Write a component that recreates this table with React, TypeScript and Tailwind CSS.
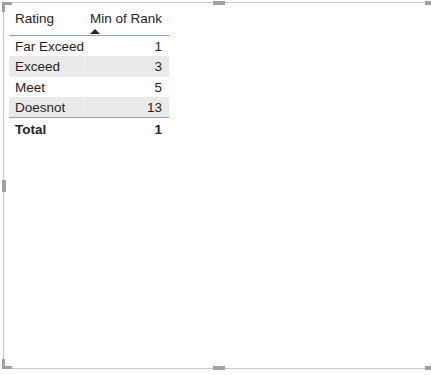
import React from 'react';

const rows = [
  { rating: 'Far Exceed', rank: 1 },
  { rating: 'Exceed', rank: 3 },
  { rating: 'Meet', rank: 5 },
  { rating: 'Doesnot', rank: 13 },
];

const rowHeights = ['h-[20px]', 'h-[21px]', 'h-[20px]', 'h-[21px]'];

// selection handles drawn over the visual frame
const Handles: React.FC = () => (
  <svg className="absolute inset-0 pointer-events-none" width="431" height="375" viewBox="0 0 431 375">
    <g fill="#a0a0a0">
      <rect x="2" y="2" width="10" height="3" />
      <rect x="2" y="2" width="3" height="10" />
      <rect x="213" y="1" width="12" height="4" />
      <rect x="425" y="1" width="6" height="4" />
      <rect x="2" y="180" width="4" height="12" />
      <rect x="2" y="359" width="3" height="10" />
      <rect x="2" y="366" width="10" height="3" />
      <rect x="213" y="366" width="12" height="4" />
      <rect x="425" y="366" width="6" height="4" />
    </g>
  </svg>
);

const App: React.FC = () => {
  return (
    <div
      className="relative w-[431px] h-[375px] bg-white pt-[2px] pl-[3px] text-[13.5px] text-[#252423] whitespace-nowrap"
      style={{ fontFamily: '"Segoe UI", "Liberation Sans", Arial, sans-serif' }}
    >
      <div className="h-[367px] border-l border-t border-b border-[#c8c8c8] pl-[5px]">
        <div className="w-[160px]">
          {/* header */}
          <div className="grid grid-cols-[76px_84px] h-[33px] pt-[6px] border-b border-[#7aa7e0]">
            <div className="pl-[6px] leading-[19px]">Rating</div>
            <div className="pl-[5px] flex flex-col">
              <span className="leading-[19px]">Min of Rank</span>
              <svg width="10" height="5" viewBox="0 0 10 5" className="mt-[1px]">
                <polygon points="0,5 5,0 10,5" fill="#252423" />
              </svg>
            </div>
          </div>

          {/* rows */}
          {rows.map((r, i) => (
            <div
              key={r.rating}
              className={`grid grid-cols-[76px_84px] items-center ${rowHeights[i]} ${
                i % 2 === 1 ? 'bg-[#eaeaea]' : 'bg-white'
              } ${i === rows.length - 1 ? 'border-b border-[#7aa7e0]' : ''}`}
            >
              <div className={`pl-[6px] leading-[19px] ${i % 2 === 1 ? 'border-r border-[#f0f0f0]' : ''}`}>
                {r.rating}
              </div>
              <div className="pr-[7px] text-right leading-[19px]">{r.rank}</div>
            </div>
          ))}

          {/* total */}
          <div className="grid grid-cols-[76px_84px] h-[22px] pt-[2px] font-bold">
            <div className="pl-[6px] leading-[19px]">Total</div>
            <div className="pr-[7px] text-right leading-[19px]">1</div>
          </div>
        </div>
      </div>

      <Handles />
    </div>
  );
};

export default App;
